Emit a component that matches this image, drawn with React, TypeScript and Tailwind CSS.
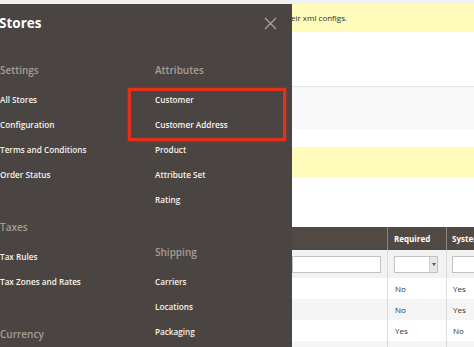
import React from 'react';

const font = { fontFamily: '"Open Sans", "Liberation Sans", sans-serif' };

// colonnes du menu
const leftGroups = [
  { title: 'Settings', items: ['All Stores', 'Configuration', 'Terms and Conditions', 'Order Status'] },
  { title: 'Taxes', items: ['Tax Rules', 'Tax Zones and Rates'] },
  { title: 'Currency', items: [] as string[] },
];

const rightGroups = [
  { title: 'Attributes', items: ['Customer', 'Customer Address', 'Product', 'Attribute Set', 'Rating'] },
  { title: 'Shipping', items: ['Carriers', 'Locations', 'Packaging'] },
];

const rows = [
  { req: 'No', sys: 'Yes' },
  { req: 'No', sys: 'Yes' },
  { req: 'Yes', sys: 'No' },
  { req: '', sys: '' },
];

type Group = { title: string; items: string[] };

const MenuColumn = ({ groups }: { groups: Group[] }) => (
  <div className="flex flex-col">
    {groups.map((g, i) => (
      <div key={g.title} className={i > 0 ? 'mt-[27px]' : ''}>
        <div className="h-[25px] flex items-center text-[10px] font-semibold text-[#a79d95]">{g.title}</div>
        <div className="mt-[5px] flex flex-col">
          {g.items.map((item) => (
            <div key={item} className="h-[25px] flex items-center text-[8.2px] font-semibold text-[#f7f3eb]">
              {item}
            </div>
          ))}
        </div>
      </div>
    ))}
  </div>
);

const App = () => {
  return (
    <div className="w-[474px] h-[347px] overflow-hidden flex flex-col bg-white" style={font}>
      <div className="h-[4px] bg-[#f1f1f1] shrink-0" />
      <div className="flex flex-1 min-h-0">
        {/* Panneau Stores */}
        <div className="relative w-[292px] shrink-0 bg-[#4a4542]">
          <div className="h-[38px] flex items-center justify-between pr-[15px]">
            <h2 className="-ml-[1px] text-[13.5px] font-bold text-white">Stores</h2>
            <svg width="13" height="13" viewBox="0 0 13 13" className="text-[#a8a29c]">
              <path d="M1 1L12 12M12 1L1 12" stroke="currentColor" strokeWidth="1.3" />
            </svg>
          </div>
          <div className="mt-[16px] grid grid-cols-[155px_1fr]">
            <MenuColumn groups={leftGroups} />
            <MenuColumn groups={rightGroups} />
          </div>
          {/* Cadre rouge */}
          <div className="absolute left-[128px] top-[84px] w-[158px] h-[53px] border-[3px] border-[#e2321c] shadow-[0_0_3px_rgba(226,50,28,0.6)]" />
        </div>

        {/* Contenu de la page */}
        <div className="flex-1 flex flex-col min-w-0 text-[8px] text-[#303030]">
          <div className="h-[28px] shrink-0 bg-[#fffbbb] flex items-center -ml-[1px] whitespace-nowrap">eir xml configs.</div>
          <div className="h-[54px] shrink-0 bg-white" />
          <div className="h-[43px] shrink-0 bg-[#f8f8f8] border-t border-[#e6e6e6]" />
          <div className="h-[18px] shrink-0 bg-white" />
          <div className="h-[31px] shrink-0 bg-[#fffbbb]" />
          <div className="h-[49px] shrink-0 bg-white" />

          {/* Grille */}
          <div className="grid grid-cols-[95px_59px_1fr]">
            <div className="h-[23px] bg-[#514943]" />
            <div className="h-[23px] bg-[#514943] border-l border-[#8a827d] flex items-center pl-[6px] font-bold text-white whitespace-nowrap">Required</div>
            <div className="h-[23px] bg-[#514943] border-l border-[#8a827d] flex items-center pl-[5px] font-bold text-white whitespace-nowrap">System</div>

            <div className="h-[28px] bg-[#f2f2f2] flex items-center pr-[6px]">
              <div className="h-[17px] w-full bg-white border border-[#c2c2c2]" />
            </div>
            <div className="h-[28px] bg-[#f2f2f2] border-l border-[#dcdcdc] flex items-center pl-[6px]">
              <div className="h-[17px] w-[44px] bg-white border border-[#c2c2c2] flex justify-end">
                <div className="w-[8px] bg-[#e6e6e6] border-l border-[#cfcfcf] flex items-center justify-center">
                  <svg width="4" height="3" viewBox="0 0 4 3">
                    <path d="M0 0H4L2 3Z" fill="#555" />
                  </svg>
                </div>
              </div>
            </div>
            <div className="h-[28px] bg-[#f2f2f2] border-l border-[#dcdcdc] flex items-center pl-[5px]">
              <div className="h-[17px] w-[40px] bg-white border border-[#c2c2c2]" />
            </div>

            {rows.map((r, i) => {
              const bg = i % 2 === 0 ? 'bg-white' : 'bg-[#f5f5f5]';
              return (
                <React.Fragment key={i}>
                  <div className={`h-[21px] ${bg}`} />
                  <div className={`h-[21px] ${bg} border-l border-[#dcdcdc] flex items-center pl-[7px]`}>{r.req}</div>
                  <div className={`h-[21px] ${bg} border-l border-[#dcdcdc] flex items-center pl-[6px]`}>{r.sys}</div>
                </React.Fragment>
              );
            })}
          </div>
        </div>
      </div>
    </div>
  );
};

export default App;
